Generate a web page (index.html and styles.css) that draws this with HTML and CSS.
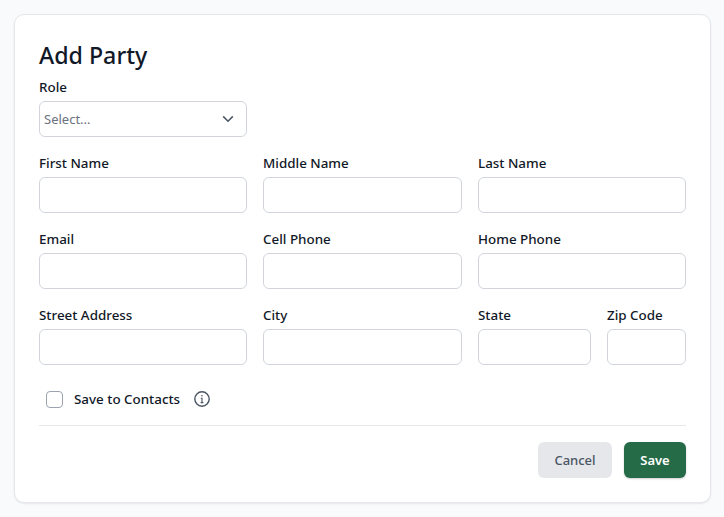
FILE: index.html
```html
<!DOCTYPE html>
<html lang="en">
<head>
    <meta charset="UTF-8">
    <title>Add Party</title>
    <link rel="stylesheet" href="styles.css">
</head>
<body>

<form class="card">
    <h1 class="title">Add Party</h1>

    <div class="field role-field">
        <label>Role</label>
        <div class="select">
            <span class="placeholder">Select...</span>
            <svg class="chevron" width="12" height="8" viewBox="0 0 12 8"><path d="M1.2 1.4 6 6.2l4.8-4.8" fill="none" stroke="#4b5563" stroke-width="1.5"/></svg>
        </div>
    </div>

    <div class="fields">
        <div class="field"><label>First Name</label><input class="input" type="text"></div>
        <div class="field"><label>Middle Name</label><input class="input" type="text"></div>
        <div class="field span-2"><label>Last Name</label><input class="input" type="text"></div>

        <div class="field"><label>Email</label><input class="input" type="text"></div>
        <div class="field"><label>Cell Phone</label><input class="input" type="text"></div>
        <div class="field span-2"><label>Home Phone</label><input class="input" type="text"></div>

        <div class="field"><label>Street Address</label><input class="input" type="text"></div>
        <div class="field"><label>City</label><input class="input" type="text"></div>
        <div class="field"><label>State</label><input class="input" type="text"></div>
        <div class="field"><label>Zip Code</label><input class="input" type="text"></div>
    </div>

    <div class="contacts">
        <span class="checkbox"></span>
        <span class="contacts-label">Save to Contacts</span>
        <svg class="info" width="16" height="16" viewBox="0 0 16 16" fill="none" stroke="#4b5563" stroke-width="1.4"><circle cx="8" cy="8" r="7.2"/><path d="M6.8 7.2H8v4.4M6.6 11.6h2.8" stroke-width="1.1"/><circle cx="7.9" cy="4.7" r=".8" fill="#4b5563" stroke="none"/></svg>
    </div>

    <div class="actions">
        <button class="btn btn-cancel" type="button">Cancel</button>
        <button class="btn btn-save" type="button">Save</button>
    </div>
</form>

</body>
</html>
```

FILE: styles.css
```css
* {
    box-sizing: border-box;
}
body {
    margin: 0;
    padding: 14px;
    background-color: #f9fafb;
    font-family: "Noto Sans", "Open Sans", sans-serif;
    color: #111827;
}
.card {
    height: 489px;
    width: 697px;
    padding: 24px;
    background-color: #fff;
    border: 1px solid #e5e7eb;
    border-radius: 10px;
    box-shadow: 0 1px 2px rgba(0, 0, 0, 0.08);
}
.title {
    margin: 0 0 6px;
    font-size: 23.2px;
    line-height: 32px;
    font-weight: 500;
}
.field label {
    display: block;
    height: 20px;
    margin-bottom: 4px;
    font-size: 13.4px;
    line-height: 20px;
    font-weight: 500;
}
.role-field {
    width: 208px;
    margin-bottom: 16px;
}
.select {
    display: flex;
    align-items: center;
    justify-content: space-between;
    height: 36px;
    padding: 0 12px 0 4px;
    border: 1px solid #d1d5db;
    border-radius: 6px;
}
.placeholder {
    font-size: 13px;
    color: #6b7280;
}
.fields {
    display: grid;
    grid-template-columns: 208px 199px 113px 79px;
    gap: 16px;
}
.span-2 {
    grid-column: span 2;
}
.input {
    display: block;
    width: 100%;
    height: 36px;
    border: 1px solid #d1d5db;
    border-radius: 6px;
    background-color: #fff;
}
.contacts {
    display: flex;
    align-items: center;
    height: 20px;
    margin-top: 24px;
    padding-left: 7px;
}
.checkbox {
    width: 17px;
    height: 17px;
    border: 1.5px solid #9ca3af;
    border-radius: 4px;
}
.contacts-label {
    margin-left: 11px;
    font-size: 13.4px;
    font-weight: 500;
}
.info {
    margin-left: 14px;
}
.actions {
    display: flex;
    justify-content: flex-end;
    gap: 12px;
    margin-top: 16px;
    padding-top: 16px;
    border-top: 1px solid #e5e7eb;
}
.btn {
    height: 36px;
    border: 0;
    border-radius: 6px;
    font-family: inherit;
    font-size: 13px;
}
.btn-cancel {
    width: 74px;
    background-color: #e5e7eb;
    color: #4b5563;
    font-weight: 500;
}
.btn-save {
    width: 62px;
    background-color: #256b47;
    color: #fff;
    font-weight: 600;
    box-shadow: 0 1px 2px rgba(0, 0, 0, 0.2);
}
```
